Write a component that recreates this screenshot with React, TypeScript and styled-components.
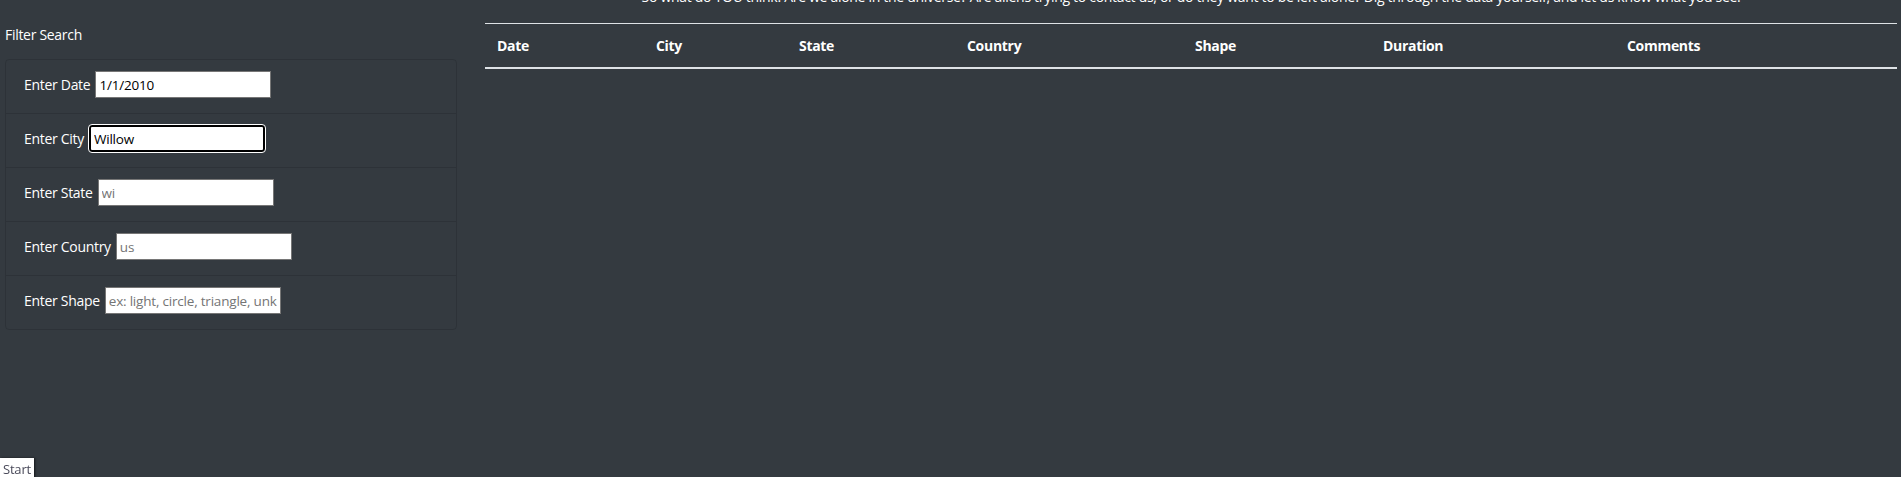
import React from 'react';
import styled, { createGlobalStyle } from 'styled-components';

const GlobalStyle = createGlobalStyle`
    html, body {
        margin: 0;
        padding: 0;
        background-color: #343a40;
        color: #fff;
        font-family: 'Open Sans', 'Noto Sans', sans-serif;
        font-size: 14px;
        letter-spacing: -0.3px;
        line-height: 1.5;
        overflow: hidden;
    }
`;

const filters = [
    { label: 'Enter Date', value: '1/1/2010', placeholder: '' },
    { label: 'Enter City', value: 'Willow', placeholder: '', focused: true },
    { label: 'Enter State', value: '', placeholder: 'wi' },
    { label: 'Enter Country', value: '', placeholder: 'us' },
    { label: 'Enter Shape', value: '', placeholder: 'ex: light, circle, triangle, unknown' },
];

const columns = [
    { title: 'Date', width: 159 },
    { title: 'City', width: 143 },
    { title: 'State', width: 168 },
    { title: 'Country', width: 228 },
    { title: 'Shape', width: 188 },
    { title: 'Duration', width: 244 },
    { title: 'Comments', width: 282 },
];

const App = () => {
    return (
        <>
            <GlobalStyle />
            <Page>
                <Sidebar>
                    <SidebarTitle>Filter Search</SidebarTitle>
                    <FilterCard>
                        {filters.map((filter) => (
                            <FilterRow key={filter.label}>
                                <FilterLabel>{filter.label}</FilterLabel>
                                <FilterInput
                                    type="text"
                                    defaultValue={filter.value}
                                    placeholder={filter.placeholder}
                                    $focused={filter.focused}
                                />
                            </FilterRow>
                        ))}
                    </FilterCard>
                </Sidebar>
                <Content>
                    <Intro>
                        So what do YOU think! Are we alone in the universe? Are aliens trying to contact us, or do they want to be left alone? Dig through the data yourself, and let us know what you see.
                    </Intro>
                    <Table>
                        <colgroup>
                            {columns.map((col) => (
                                <col key={col.title} style={{ width: col.width }} />
                            ))}
                        </colgroup>
                        <thead>
                            <tr>
                                {columns.map((col) => (
                                    <HeadCell key={col.title}>{col.title}</HeadCell>
                                ))}
                            </tr>
                        </thead>
                        <tbody />
                    </Table>
                </Content>
            </Page>
            <StartButton>Start</StartButton>
        </>
    );
};

const Page = styled.div`
    display: flex;
    align-items: flex-start;
    gap: 28px;
    width: 1901px;
    height: 477px;
`;

const Sidebar = styled.aside`
    width: 452px;
    padding: 24px 0 0 5px;
    flex-shrink: 0;
`;

const SidebarTitle = styled.div`
    font-size: 14px;
    line-height: 21px;
    margin-bottom: 14px;
`;

const FilterCard = styled.div`
    display: flex;
    flex-direction: column;
    border: 1px solid rgba(0, 0, 0, 0.125);
    border-radius: 4px;
`;

const FilterRow = styled.div`
    display: flex;
    align-items: baseline;
    height: 54px;
    padding: 11px 18px 0;
    box-sizing: border-box;
    border-bottom: 1px solid rgba(0, 0, 0, 0.125);

    &:last-child {
        border-bottom: none;
        height: 53px;
    }
`;

const FilterLabel = styled.label`
    font-size: 14px;
    margin-right: 5px;
`;

const FilterInput = styled.input<{ $focused?: boolean }>`
    width: 176px;
    height: 27px;
    box-sizing: border-box;
    padding: 0 3px;
    border: ${(p) => (p.$focused ? '2px solid #000' : '1px solid #767676')};
    border-radius: ${(p) => (p.$focused ? '3px' : '0')};
    outline: ${(p) => (p.$focused ? '1px solid #fff' : 'none')};
    background: #fff;
    color: #000;
    font-family: 'Open Sans', 'Noto Sans', sans-serif;
    font-size: 13.5px;
    letter-spacing: -0.2px;

    &::placeholder {
        color: #757575;
    }
`;

const Content = styled.main`
    width: 1412px;
    margin-top: -14px;
`;

const Intro = styled.p`
    margin: 0 0 16px;
    text-align: center;
    font-size: 14px;
    line-height: 21px;
`;

const Table = styled.table`
    width: 1412px;
    table-layout: fixed;
    border-collapse: collapse;
`;

const HeadCell = styled.th`
    text-align: left;
    font-weight: 700;
    font-size: 14px;
    line-height: 21px;
    padding: 11px 12px;
    border-top: 1px solid #dee2e6;
    border-bottom: 2px solid #dee2e6;
`;

const StartButton = styled.button`
    position: fixed;
    left: 0;
    bottom: -8px;
    height: 27px;
    padding: 0 3px 6px;
    background: #fff;
    color: #4a4a5a;
    border: none;
    box-shadow: 1px 0 2px rgba(0, 0, 0, 0.6);
    font-family: 'Open Sans', 'Noto Sans', sans-serif;
    font-size: 13px;
    letter-spacing: -0.2px;
`;

export default App;
